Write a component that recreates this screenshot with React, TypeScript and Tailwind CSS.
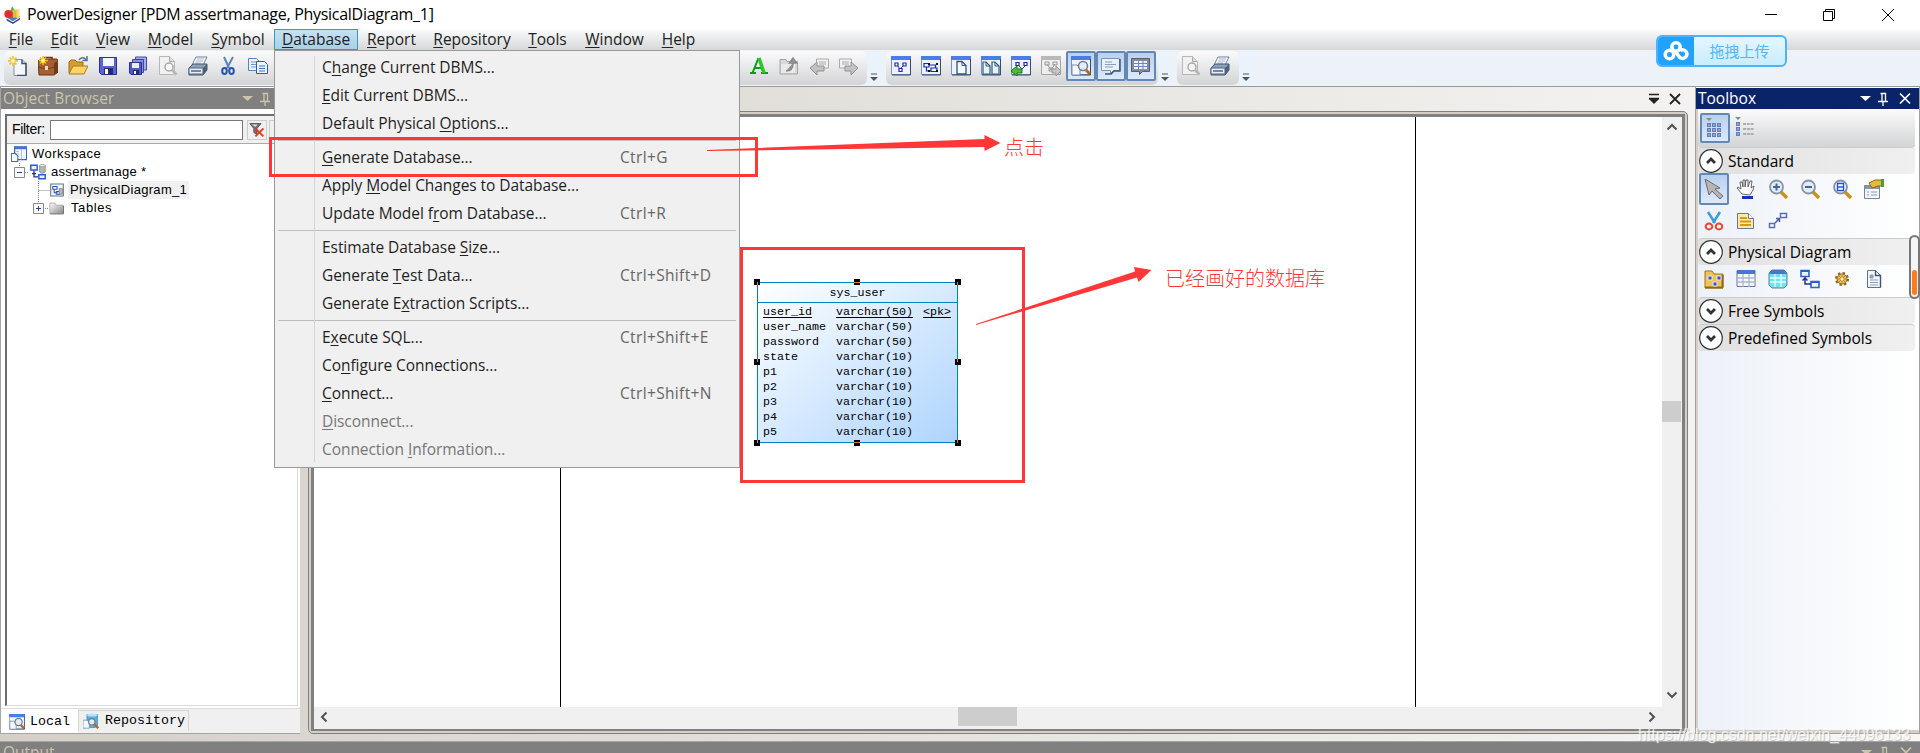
import type { ReactNode } from "react";

const ICONS: Record<string, ReactNode> = {
  newDoc: (
    <>
      <path d="M6 3.500h8l4 4V19.500H6z" fill="#f4f8fd" stroke="#8194ad" />
      <path d="M14 3.500v4h4v12H9" fill="none" stroke="#3d5273" strokeWidth="1.500" />
      <path d="M5 0v10M0 5h10M1.500 1.500l7 7M8.500 1.500l-7 7" stroke="#f0bf22" strokeWidth="1.500" />
      <circle cx="5" cy="5" r="2" fill="#fff3a0" />
    </>
  ),
  project: (
    <>
      <path d="M7 4V1.500h7V4" fill="none" stroke="#6b3413" strokeWidth="1.500" />
      <path d="M0 5l4-2h15l1 2v11l-4 3H1z" fill="#a65f34" stroke="#6b3413" />
      <path d="M16 7l4-2v11l-4 3z" fill="#6f3a1a" />
      <path d="M1 11c4 2 11 2 15 0" fill="none" stroke="#70371a" />
      <rect x="7" y="10" width="3" height="4" fill="#e9d9b8" />
      <path d="M5 0v9M1 4.500h9M2 1.500l6 6M8 1.500l-6 6" stroke="#f0bf22" strokeWidth="1.500" />
      <circle cx="5" cy="4.500" r="2" fill="#fff3a0" />
    </>
  ),
  open: (
    <>
      <path d="M1 17V6l2-2h4l2 2h6v11z" fill="#d69c30" stroke="#9a6b16" />
      <path d="M1 18l4-8h15l-4 8z" fill="#ffd465" stroke="#a97a1e" />
      <path d="M11 4c2-3 5-3 7-.5M19 0v4.500h-4.500" fill="none" stroke="#56739b" strokeWidth="1.500" />
    </>
  ),
  save: (
    <>
      <path d="M1.500 1.500h17v17h-15l-2-2z" fill="#5a62d6" stroke="#2c3187" />
      <rect x="5" y="2" width="11" height="8" fill="#f4f6fd" />
      <rect x="6" y="12" width="9" height="7" fill="#252a70" />
      <rect x="7" y="13" width="3" height="5" fill="#fff" />
    </>
  ),
  saveAll: (
    <>
      <path d="M7.500 1h11v13h-11z" fill="#a3abe8" stroke="#454da8" />
      <path d="M4.500 3.500h11v13h-11z" fill="#8790df" stroke="#3d449f" />
      <path d="M1.500 6.500h12v12H3l-1.500-1.500z" fill="#5058c8" stroke="#2c3187" />
      <rect x="4" y="7" width="7" height="5" fill="#e8ecfb" />
      <rect x="5" y="14" width="6" height="5" fill="#252a70" />
      <rect x="6" y="15" width="2" height="3" fill="#fff" />
    </>
  ),
  preview: (
    <>
      <path d="M1.500.5h10l5 5v13h-15z" fill="#f1f1f1" stroke="#b7b7b7" />
      <path d="M11.500.5v5h5" fill="#ddd" stroke="#aaa" />
      <circle cx="11" cy="11" r="4" fill="#f7f7f7" stroke="#a8a8a8" strokeWidth="1.500" />
      <path d="M14 14l4.500 4.500" stroke="#b5b5b5" strokeWidth="2.500" />
    </>
  ),
  print: (
    <>
      <path d="M8 1h11l-4 8H4z" fill="#fdfdff" stroke="#6c7f98" />
      <path d="M9 3h7M8 5h7M7 7h6" stroke="#9fb4d0" />
      <path d="M1 12l4-4h14v6l-4 5H1z" fill="#8ea1ba" stroke="#44566f" />
      <path d="M1 12h14v6H1z" fill="#e6edf6" stroke="#52657f" />
      <path d="M15 12l4-4v6l-4 5z" fill="#4c607c" />
      <path d="M3 15h10" stroke="#52657f" strokeWidth="1.500" />
    </>
  ),
  cut: (
    <>
      <path d="M6 1l5 11M15 1L9 12" stroke="#5e83b8" strokeWidth="2" />
      <ellipse cx="6.500" cy="15" rx="2.300" ry="3" fill="none" stroke="#2554b0" strokeWidth="2" />
      <ellipse cx="13.500" cy="15" rx="2.300" ry="3" fill="none" stroke="#2554b0" strokeWidth="2" />
    </>
  ),
  copy: (
    <>
      <path d="M.5 2.500h8l3 3v9H.5z" fill="#eef4fd" stroke="#5b82c4" />
      <path d="M3 6h6M3 8.500h6M3 11h6" stroke="#6c96d8" />
      <path d="M8.500 5.500h8l3 3v9h-11z" fill="#eef4fd" stroke="#2f5cab" />
      <path d="M11 10h6M11 12.500h6M11 15h6" stroke="#3e72c6" />
    </>
  ),
  font: (
    <>
      <path d="M1 17h6M12 17h7M3.500 17L9.500 2M6 12h8" fill="none" stroke="#109a10" strokeWidth="2" />
      <path d="M10 2l5 15" stroke="#2cc42c" strokeWidth="3.500" />
    </>
  ),
  upFolder: (
    <>
      <path d="M1 3.500h6l1 2h10.500v12.500H1z" fill="#d9d9d9" stroke="#a5a5a5" />
      <path d="M2 8h14v9H2z" fill="#e9e9e9" />
      <path d="M7 15c5 0 7-2 7-8M10.500 7h7L14 2z" fill="#929292" stroke="#8a8a8a" strokeWidth="1.500" />
    </>
  ),
  back: (
    <>
      <path d="M7.500 3h12v9h-12z" fill="#f1f1f1" stroke="#aaa" />
      <path d="M10 6h7M10 8h7" stroke="#aaa" />
      <path d="M1 12l7-6v4h7v5H8v4z" fill="#c2c2c2" stroke="#919191" />
    </>
  ),
  forward: (
    <>
      <path d="M.5 3h12v9H.5z" fill="#f1f1f1" stroke="#aaa" />
      <path d="M3 6h7M3 8h7" stroke="#aaa" />
      <path d="M19 12l-7-6v4H6v5h6v4z" fill="#c2c2c2" stroke="#919191" />
    </>
  ),
  diagram: (
    <>
      <WindowFrame />
      <path d="M6 9l3 4 4-4" fill="none" stroke="#2c35b5" />
      <path d="M4 7h3v3H4zM12 7h3v3h-3zM8 12.500h3v3H8z" fill="#fff" stroke="#1d27b5" strokeWidth="1.200" />
    </>
  ),
  selection: (
    <>
      <WindowFrame />
      <path d="M3 7.500h5v3.500H3zM10 12h6v3.500h-6zM5.500 11v4h4M8.500 9h6v3" fill="none" stroke="#1d27b5" strokeWidth="1.200" />
      <path d="M7 7h2v2H7zM15 7h2v2h-2zM7 14h2v2H7zM15 14h2v2h-2z" fill="#111" />
    </>
  ),
  page: (
    <>
      <WindowFrame />
      <path d="M6 5.500h5l4 4V18H6z" fill="#f2f8fd" stroke="#30547b" strokeWidth="1.300" />
      <path d="M11 5.500v4h4" fill="none" stroke="#30547b" />
    </>
  ),
  pages: (
    <>
      <WindowFrame />
      <path d="M2 6h3l4 4v8H2zM11 6h3l4 4v8h-7z" fill="#e9f4fc" stroke="#36587c" strokeWidth="1.200" />
      <path d="M5 6v4h4M14 6v4h4" fill="none" stroke="#36587c" />
    </>
  ),
  diagramBack: (
    <>
      <WindowFrame />
      <path d="M7 9l4 4 4-4" fill="none" stroke="#2c35b5" />
      <path d="M5 6.500h3v3H5zM13 6.500h3v3h-3z" fill="#fff" stroke="#1d27b5" strokeWidth="1.200" />
      <path d="M0 15l6-5v3h5v4H6v3z" fill="#4cbd35" stroke="#177a15" />
    </>
  ),
  diagramNext: (
    <>
      <path d="M.5.5h19v18H.5z" fill="#eee" stroke="#a5a5a5" />
      <path d="M0 0h20v4H0z" fill="#b9b9b9" />
      <path d="M6 8l4 6 4-6M4 6h4v3H4zM12 6h4v3h-4zM8 12h4v3H8z" fill="#e8e8e8" stroke="#999" />
      <path d="M20 15l-5-5v3h-4v4h4v3z" fill="#c6c6c6" stroke="#9a9a9a" />
    </>
  ),
  browse: (
    <>
      <WindowFrame />
      <path d="M1 9h5l3 3v7H1z" fill="#f4f8fd" stroke="#7b8ea9" />
      <circle cx="12" cy="10" r="4.500" fill="#e3ecf6" stroke="#6b7c93" strokeWidth="1.500" />
      <path d="M15 14l4 4" stroke="#b56a1d" strokeWidth="3" />
    </>
  ),
  output: (
    <>
      <path d="M.5 2.500h18v12h-6l-3 3v-3h-9z" fill="#e8f0fb" stroke="#7d93b4" />
      <path d="M19 3v12h-6l-3 3H4" fill="none" stroke="#3f5777" strokeWidth="1.500" />
      <path d="M4 6h7M4 8.500h11M4 11h8" stroke="#8b9db8" />
    </>
  ),
  grid: (
    <>
      <path d="M.5 2.500h18v13h-7l-3 3v-3h-8z" fill="#858b98" stroke="#555f70" />
      <path d="M3 5h13v8H3z" fill="#eef3ff" />
      <path d="M3 7.500h13M3 10.500h13M7.500 5v9M12 5v9" stroke="#6982d8" />
    </>
  ),
  pointer: <path d="M1 0l15 9-5 1 8 7-3 3-8-8-3 4z" fill="#b5b5b5" stroke="#6c6c6c" />,
  hand: (
    <>
      <path d="M6 15L1 9l1-1 3 2-1-7h2l1 5V1h2v7l1-7h2v7l2-6h2l-1 7 3-2-1 4-3 5z" fill="#fff" stroke="#444" strokeWidth=".8" />
      <path d="M6 17h11v3H6z" fill="#1430c4" />
    </>
  ),
  zoomIn: (
    <>
      <Lens />
      <path d="M5 8h7M8.500 4.500v7" stroke="#41659e" strokeWidth="2" />
    </>
  ),
  zoomOut: (
    <>
      <Lens />
      <path d="M5 8h7" stroke="#41659e" strokeWidth="2" />
    </>
  ),
  zoomPage: (
    <>
      <Lens />
      <path d="M5.500 4.500h6v7h-6zM5.500 8h6" fill="#fff" stroke="#2352e0" strokeWidth="1.300" />
    </>
  ),
  properties: (
    <>
      <path d="M.5 6.500h15v13H.5z" fill="#f3f6fb" stroke="#77869c" />
      <path d="M1 7h14v3H1z" fill="#8797ae" />
      <path d="M3 13h2M7 13h6M3 16h2M7 16h6" stroke="#8796ad" />
      <path d="M5 4l6-3h9v6h-6l-6 2z" fill="#e6bb35" stroke="#8b661b" />
      <path d="M17 0h3v8h-3z" fill="#4a9a46" />
    </>
  ),
  cutRed: (
    <>
      <path d="M4 1l7 11M16 1L9 12" stroke="#3d9bdc" strokeWidth="2.500" />
      <ellipse cx="5" cy="15.500" rx="3.300" ry="3" fill="none" stroke="#ed4434" strokeWidth="2" />
      <ellipse cx="15" cy="15.500" rx="3.300" ry="3" fill="none" stroke="#ed4434" strokeWidth="2" />
    </>
  ),
  note: (
    <>
      <path d="M1.500 2.500h11l5 5v10h-16z" fill="#fde9a1" stroke="#6c7794" />
      <path d="M12.500 2.500v5h5" fill="#fff" stroke="#6c7794" />
      <path d="M4 7h7M4 10.500h11M4 14h11" stroke="#d89a18" strokeWidth="1.800" />
    </>
  ),
  link: (
    <>
      <path d="M1.500 12.500h5v4h-5zM12.500 2.500h6v4h-6z" fill="#fff" stroke="#596eb8" strokeWidth="1.500" />
      <path d="M7 12l4-4M8 7.500h3.500V11" fill="none" stroke="#4b5f9f" strokeWidth="1.500" />
    </>
  ),
  package: (
    <>
      <path d="M1 19V2h7l2 3h9v14z" fill="#f0c352" stroke="#9d7520" />
      <path d="M1 18.500h18M18.500 6v12" stroke="#8f681b" strokeWidth="2" />
      <path d="M4 7h4v4H4zM13 7h4v4h-4zM9 13h4v4H9z" fill="#3455c9" stroke="#dfe8ff" />
    </>
  ),
  table: (
    <>
      <path d="M1 1.500h18v16H1z" fill="#f6f8fd" stroke="#66799c" />
      <path d="M1 1h18v4H1z" fill="#4d73d0" />
      <path d="M1 9h18M1 13h18M7 5v13M13 5v13" stroke="#a9b7d2" strokeWidth="1.300" />
    </>
  ),
  view: (
    <>
      <path d="M4 1h12l3 3v12l-3 3H4l-3-3V4z" fill="#6fe4ea" stroke="#5b83a5" />
      <path d="M4 1h12l3 4H1z" fill="#4777cc" />
      <path d="M2 9h16M2 13h16M7 5v13M13 5v13" stroke="#e6ffff" strokeWidth="1.300" />
    </>
  ),
  reference: (
    <>
      <path d="M1 1.500h8v6H1zM11 12.500h8v6h-8z" fill="#eef5ff" stroke="#2b62c7" strokeWidth="1.600" />
      <path d="M1 1h8v2H1zM11 12h8v2h-8z" fill="#2b62c7" />
      <path d="M5 8v7h6M2.500 11.500L5 9l2.500 2.500" fill="none" stroke="#20309c" strokeWidth="1.500" />
    </>
  ),
  gear: (
    <>
      <circle cx="10" cy="10" r="5.500" fill="none" stroke="#8a5e19" strokeWidth="3" strokeDasharray="2.200 2.100" />
      <circle cx="10" cy="10" r="5" fill="#f0bd54" stroke="#9a6d22" />
      <path d="M10 6v8M6 10h8M7 7l6 6M13 7l-6 6" stroke="#a6792d" strokeWidth=".8" />
      <circle cx="10" cy="10" r="1.500" fill="#fff2ca" />
    </>
  ),
  file: (
    <>
      <path d="M3.500 1.500h8l5 5v12h-13z" fill="#f3f7fc" stroke="#5e718e" />
      <path d="M11.500 1.500v5h5v12" fill="none" stroke="#41546f" strokeWidth="1.400" />
      <path d="M6 6h3v3H6zM6 11h8M6 13.500h8M6 16h8" fill="#8fa0ba" stroke="#8fa0ba" />
    </>
  ),
  iconView: (
    <>
      <path d="M0 0h6L3 3z" fill="#888" />
      <path
        d="M1 5h4v4H1zM6 5h4v4H6zM11 5h4v4h-4zM1 10h4v4H1zM6 10h4v4H6zM11 10h4v4h-4zM1 15h4v4H1zM6 15h4v4H6zM11 15h4v4h-4z"
        fill="#5a83c4"
      />
      <path
        d="M2 7h2M7 7h2M12 7h2M2 12h2M7 12h2M12 12h2M2 17h2M7 17h2M12 17h2"
        stroke="#c89ab8"
        strokeWidth="1.500"
      />
    </>
  ),
  listView: (
    <>
      <path d="M0 0h6L3 3z" fill="#888" />
      <path d="M1 5h4v4H1zM1 10h4v4H1zM1 15h4v4H1z" fill="#5a83c4" />
      <path d="M2 7h2M2 12h2M2 17h2" stroke="#c89ab8" strokeWidth="1.500" />
      <path d="M8 7h11M8 12h11M8 17h11" stroke="#9a9a9a" strokeWidth="1.500" strokeDasharray="3 .8" />
    </>
  ),
  repository: (
    <>
      <path d="M5 2v14c2 3 11 3 13 0V2z" fill="#55b4e4" stroke="#3887b8" />
      <ellipse cx="11.500" cy="2.500" rx="6.500" ry="2" fill="#b5e3f7" />
      <path d="M0 9h5l3 3v7H0z" fill="#f4f8fd" stroke="#7b8ea9" />
      <circle cx="11" cy="11" r="4" fill="#e3ecf6" stroke="#6b7c93" strokeWidth="1.500" />
      <path d="M14 14l5 5" stroke="#b56a1d" strokeWidth="3" />
    </>
  ),
  workspace: (
    <>
      <path d="M4.500 1h15v16h-15z" fill="#f3f7ff" stroke="#3763b8" strokeWidth="1.500" />
      <path d="M4 1h16v3H4z" fill="#3e73dc" />
      <path d="M6 7h4M6 10h4M6 13h4M13 4v13" stroke="#8fb0e8" />
      <path d="M.5 9.500h5l3 3v7h-8z" fill="#f3f8fb" stroke="#526b84" strokeWidth="1.300" />
    </>
  ),
  model: (
    <>
      <path d="M1 1.500h8v6H1zM11 13.500h8v5h-8z" fill="#eff6ff" stroke="#2360cd" strokeWidth="1.800" />
      <path d="M5 8v8h5M2.500 12h5" fill="none" stroke="#272a91" strokeWidth="1.600" />
      <path d="M12 2v8c1 2 6 2 7 0V2z" fill="#b5b5b5" stroke="#878787" />
      <ellipse cx="15.500" cy="2" rx="3.500" ry="1.500" fill="#eee" stroke="#999" />
    </>
  ),
  physical: (
    <>
      <path d="M1 1.500h18v17H1z" fill="#f3f7fc" stroke="#65748c" strokeWidth="1.500" />
      <path d="M4 5h6v4H4zM6 9v5h5M9 12h5v4H9z" fill="#fff" stroke="#2058c4" strokeWidth="1.500" />
      <path d="M13 8v8h5V8z" fill="#b8b8b8" stroke="#777" />
    </>
  ),
  folder: (
    <>
      <path d="M.5 18V3h7l2 3h10v12z" fill="url(#folderFill)" stroke="#999" />
      <path d="M1 18.500h19V7" fill="none" stroke="#555" />
      <linearGradient id="folderFill" x2="1" y2="1">
        <stop stopColor="#fff" />
        <stop offset="1" stopColor="#888" />
      </linearGradient>
    </>
  ),
  filterOff: (
    <>
      <path d="M1 2h14l-5 6v8l-4-3V8z" fill="#70757b" stroke="#444" />
      <path d="M3 3h8L8 6z" fill="#dce1e5" />
      <path d="M8 8l10 10M18 8L8 18" stroke="#e43d22" strokeWidth="2.500" />
    </>
  ),
  app: (
    <>
      <path d="M2 11l9 6 8-5-8-6z" fill="#5577bd" />
      <path d="M4 14l7 4 8-5v2l-8 5-7-4z" fill="#374f8e" />
      <path d="M10 0l4 6H8z" fill="#58b64d" />
      <path d="M11 4h7v9h-7z" fill="#e8b637" />
      <path d="M15 4h3v9h-3z" fill="#f9dc70" />
      <circle cx="6" cy="9" r="4.500" fill="#e02f27" />
    </>
  ),
};

function WindowFrame() {
  return (
    <>
      <path d="M.5.5h19v18H.5z" fill="#eef2fa" stroke="#7b93be" />
      <path d="M0 0h20v4H0z" fill="#4b7de8" />
      <path d="M19.500 3v16H1" fill="none" stroke="#344d70" />
    </>
  );
}

function Lens() {
  return (
    <>
      <path d="M13 13l6 6" stroke="#c79325" strokeWidth="3.500" />
      <circle cx="8.500" cy="8" r="6.500" fill="#e3edfa" stroke="#8a93a1" strokeWidth="1.800" />
    </>
  );
}

function Icon({ name, className = "size-5" }: { name: string; className?: string }) {
  return (
    <svg viewBox="0 0 20 20" className={`block shrink-0 ${className}`}>
      {ICONS[name]}
    </svg>
  );
}

// "&" marks the mnemonic letter, as in a Win32 resource string
function Mnemonic({ text }: { text: string }) {
  const at = text.indexOf("&");
  return (
    <span className="whitespace-pre">
      {text.slice(0, at)}
      <span className="underline decoration-1 underline-offset-2">{text[at + 1]}</span>
      {text.slice(at + 2)}
    </span>
  );
}

const MENUS = [
  { label: "&File", width: "w-[42px]" },
  { label: "&Edit", width: "w-[45px]" },
  { label: "&View", width: "w-[52px]" },
  { label: "&Model", width: "w-[63px]" },
  { label: "&Symbol", width: "w-[72px]" },
  { label: "&Database", width: "w-[84px]", open: true },
  { label: "&Report", width: "w-[67px]" },
  { label: "&Repository", width: "w-[94px]" },
  { label: "&Tools", width: "w-[57px]" },
  { label: "&Window", width: "w-[77px]" },
  { label: "&Help", width: "w-[51px]" },
];

type Entry = { label: string; keys?: string; disabled?: boolean };

const DATABASE_MENU: Entry[][] = [
  [{ label: "C&hange Current DBMS..." }, { label: "&Edit Current DBMS..." }, { label: "Default Physical &Options..." }],
  [
    { label: "&Generate Database...", keys: "Ctrl+G" },
    { label: "Apply &Model Changes to Database..." },
    { label: "Update Model f&rom Database...", keys: "Ctrl+R" },
  ],
  [
    { label: "Estimate Database &Size..." },
    { label: "Generate &Test Data...", keys: "Ctrl+Shift+D" },
    { label: "Generate E&xtraction Scripts..." },
  ],
  [
    { label: "E&xecute SQL...", keys: "Ctrl+Shift+E" },
    { label: "Co&nfigure Connections..." },
    { label: "&Connect...", keys: "Ctrl+Shift+N" },
    { label: "&Disconnect...", disabled: true },
    { label: "Connection &Information...", disabled: true },
  ],
];

const COLUMNS = [
  ["user_id", "varchar(50)", "<pk>"],
  ["user_name", "varchar(50)"],
  ["password", "varchar(50)"],
  ["state", "varchar(10)"],
  ["p1", "varchar(10)"],
  ["p2", "varchar(10)"],
  ["p3", "varchar(10)"],
  ["p4", "varchar(10)"],
  ["p5", "varchar(10)"],
];

const HANDLES = [
  [0, 0], [100, 0], [201, 0],
  [0, 80], [201, 80],
  [0, 161], [100, 161], [201, 161],
];

function TitleBar() {
  return (
    <div className="flex h-[29px] items-center bg-white">
      <Icon name="app" className="ml-0.5 h-[18px] w-5" />
      <span className="ml-[5px] whitespace-nowrap text-[16px] leading-[29px] tracking-[-0.28px] text-black">
        PowerDesigner [PDM assertmanage, PhysicalDiagram_1]
      </span>
      <svg className="ml-auto mr-[22px] h-[14px] w-[134px]" viewBox="0 0 134 14" fill="none" stroke="#000">
        <path d="M1 6.500h12M59.500 3.500h9v9h-9zM61.500 3v-1.500h9v9H69M118 1l12 12M130 1l-12 12" />
      </svg>
    </div>
  );
}

function MenuBar() {
  return (
    <div className="flex h-[21px] bg-linear-to-b from-[#fbfcfc] to-[#d5d7d9] text-[15.5px] leading-[21px] text-[#222]">
      {MENUS.map((m) => (
        <div
          key={m.label}
          className={`${m.width} flex h-[21px] shrink-0 items-center justify-center ${
            m.open ? "border border-[#2a9fd6] bg-linear-to-b from-[#c6e2f2] to-[#a9cfe3]" : ""
          }`}
        >
          <Mnemonic text={m.label} />
        </div>
      ))}
    </div>
  );
}

function Overflow() {
  return (
    <div className="flex h-[34px] w-[13px] items-end justify-center bg-[#eaf2fc] pb-[4px]">
      <svg className="size-2" viewBox="0 0 8 8">
        <path d="M1 1h6" stroke="#555" />
        <path d="M0 4h8L4 8z" fill="#555" />
      </svg>
    </div>
  );
}

const BAND = "flex h-[34px] items-center rounded-md bg-linear-to-b from-[#fbfbfc] to-[#d3d4d6] pb-1";
const PRESSED = "rounded-xs border-2 border-[#6588b2] bg-linear-to-b from-[#b9d0ef] to-[#dce9fb]";

function ToolBar() {
  const main = ["newDoc", "project", "open", "save", "saveAll", "preview", "print", "cut", "copy"];
  const nav = ["font", "upFolder", "back", "forward"];
  const views = ["diagram", "selection", "page", "pages", "diagramBack", "diagramNext", "browse", "output", "grid"];
  return (
    <div className="flex h-[37px] border-b border-[#999] bg-[#edf1f8] pt-px pl-1">
      <div className={`${BAND} w-[863px] justify-between pr-[3px]`}>
        <div className="flex gap-2.5 pl-[4px]">
          {main.map((n) => (
            <Icon key={n} name={n} />
          ))}
        </div>
        <div className="flex gap-2.5 pr-[5px]">
          {nav.map((n) => (
            <Icon key={n} name={n} />
          ))}
        </div>
      </div>
      <Overflow />
      <div className={`${BAND} ml-[6px] w-[272px]`}>
        {views.map((n, i) => (
          <div
            key={n}
            className={`flex h-[30px] w-[30px] shrink-0 items-center justify-center ${i > 5 ? PRESSED : ""}`}
          >
            <Icon name={n} />
          </div>
        ))}
      </div>
      <Overflow />
      <div className={`${BAND} ml-[6px] w-[62px] gap-[9px] pl-1`}>
        <Icon name="preview" />
        <Icon name="print" />
      </div>
      <Overflow />
    </div>
  );
}

function PaneButtons({ className }: { className: string }) {
  return (
    <svg className={`h-4 w-[54px] ${className}`} viewBox="0 0 54 16" fill="none" stroke="currentColor">
      <path d="M1 5h11L6.500 10z" fill="currentColor" stroke="none" />
      <path d="M21.500 2.500h5v7.500M23 2.500v7.500M19 10.500h10M24 11v4" strokeWidth="1.300" />
      <path d="M41 2.500l10 10M51 2.500l-10 10" strokeWidth="1.700" />
    </svg>
  );
}

function ObjectBrowser() {
  return (
    <div className="flex w-[300px] shrink-0 flex-col border-b border-l border-[#a5a5a5] bg-white">
      <div className="mt-px flex h-[21px] items-center justify-between bg-[#808080] pl-[2px] text-[15.5px] text-[#cbc5ac]">
        <span>Object Browser</span>
        <PaneButtons className="mr-[5px]" />
      </div>
      <div className="mt-[5px] mr-[2px] ml-1 flex min-h-0 flex-1 flex-col border-t-2 border-r border-b border-l-2 border-t-[#6e6e6e] border-r-[#dcdcdc] border-b-[#dcdcdc] border-l-[#6e6e6e] font-['Liberation_Sans',sans-serif] text-[13px] text-black">
        <div className="flex h-[28px] shrink-0 items-center border-b border-[#aaa] bg-[#f0f0f0] pl-[5px] text-[14px]">
          <span className="w-[38px] tracking-[-0.3px]">Filter:</span>
          <div className="h-5 w-[193px] border border-[#777] bg-white" />
          <div className="ml-1 flex h-5 w-[20px] items-center justify-center border border-[#ccc]">
            <Icon name="filterOff" className="size-4" />
          </div>
          <div className="ml-[2px] h-5 w-[20px] border border-[#ccc]" />
        </div>
        <Tree />
      </div>
      <div className="mt-[2px] flex h-[25px] shrink-0 border-t border-[#ddd] bg-[#f0f0f0] font-['Liberation_Mono',monospace] text-[13.33px] text-black">
        <div className="flex w-[77px] items-center gap-[5px] bg-white pt-px pl-[8px]">
          <Icon name="browse" className="size-4" />
          Local
        </div>
        <div className="mt-px flex h-[21px] w-[111px] items-center gap-[6px] border-t border-r border-l border-[#d5d5d5] pl-[4px]">
          <Icon name="repository" className="size-4" />
          Repository
        </div>
      </div>
    </div>
  );
}

function Toggle({ open }: { open: boolean }) {
  return (
    <svg className="size-[11px] shrink-0" viewBox="0 0 11 11">
      <path d="M.5.5h10v10H.5z" fill="#f8f8f8" stroke="#888" />
      <path d={open ? "M3 5.500h5" : "M3 5.500h5M5.500 3v5"} stroke="#2a439b" />
    </svg>
  );
}

function Tree() {
  return (
    <div className="relative flex-1 bg-white pt-px [&>div]:flex [&>div]:h-[18px] [&>div]:items-center [&>div]:whitespace-pre">
      <svg className="absolute top-px left-0 h-[80px] w-[60px]" viewBox="0 0 60 80" stroke="#888" strokeDasharray="1 1">
        <path d="M12.500 18v4M18 27.500h4M31.500 36v24M31.500 45.500h11M36 63.500h5" />
      </svg>
      <div className="gap-[5px] pl-1 tracking-[0.5px]">
        <Icon name="workspace" className="size-4" />
        Workspace
      </div>
      <div className="pl-[7px]">
        <Toggle open />
        <Icon name="model" className="mr-[5px] ml-[5px] size-4" />
        <span className="tracking-[0.3px]">assertmanage *</span>
      </div>
      <div className="pl-[43px]">
        <Icon name="physical" className="mr-[4px] size-[14px]" />
        <span className="h-[18px] w-[121px] bg-[#f0f0f0] pl-[2px] leading-[18px] tracking-[0.3px]">
          PhysicalDiagram_1
        </span>
      </div>
      <div className="pl-[26px]">
        <Toggle open={false} />
        <Icon name="folder" className="mr-[7px] ml-[5px] h-[14px] w-[15px]" />
        <span className="tracking-[0.6px]">Tables</span>
      </div>
    </div>
  );
}

function TableSymbol() {
  return (
    <div className="absolute top-[165px] left-[443px] h-[161px] w-[201px] border border-[#0080c0] bg-linear-to-br from-white to-[#aed4fd] font-['Liberation_Mono',monospace] text-[11.67px] text-black">
      <div className="h-5 border-b border-[#0080c0] text-center leading-[20px]">sys_user</div>
      <div className="pt-[2px] pl-[5px]">
        {COLUMNS.map(([name, type, key]) => (
          <div
            key={name}
            className={`flex h-[15px] leading-[15px] ${key ? "underline decoration-1 underline-offset-2" : ""}`}
          >
            <span className="inline-block w-[73px]">{name}</span>
            <span className="inline-block w-[87px]">{type}</span>
            {key && <span className="inline-block">{key}</span>}
          </div>
        ))}
      </div>
      <svg className="absolute -top-[5px] -left-[5px] h-[169px] w-[209px]" viewBox="-4 -4 209 169">
        {HANDLES.map(([x, y]) => (
          <g key={`${x}-${y}`}>
            <rect x={x - 3} y={y - 3} width="6" height="6" />
            {x === 100 ? (
              <path d={`M${x - 3} ${y - (y ? 0.5 : -0.5)}h6`} stroke="#f07838" />
            ) : (
              <path d={`M${x + (x ? -0.5 : 0.5)} ${y - (y ? 3 : 0)}v3`} stroke="#f07838" />
            )}
          </g>
        ))}
      </svg>
    </div>
  );
}

function Chevron({ d }: { d: string }) {
  return (
    <svg className="size-3 shrink-0" viewBox="0 0 12 12" fill="none" stroke="#505050" strokeWidth="2">
      <path d={d} />
    </svg>
  );
}

function Workspace() {
  return (
    <div className="ml-2 flex w-[1380px] shrink-0 flex-col">
      <div className="flex h-6 shrink-0 items-center justify-end pr-[6px]">
        <svg className="h-3 w-[34px]" viewBox="0 0 34 12" fill="none" stroke="#222">
          <path d="M1 1.500h10M1 5.500h10" strokeWidth="1.500" />
          <path d="M1 6h10l-5 5z" fill="#222" stroke="none" />
          <path d="M22 1l10 10M32 1L22 11" strokeWidth="1.800" />
        </svg>
      </div>
      <div className="flex-1 rounded-[5px] border border-[#808080] bg-[#d4d0c8] p-[2px]">
        <div className="flex h-full flex-col border-3 border-[#808080] border-b-2 bg-[#f0f0f0]">
          <div className="flex h-[590px]">
            <div className="relative h-full w-[1348px] bg-white">
              <div className="mr-[246px] ml-[246px] h-full w-[856px] border-r border-l border-black" />
              <TableSymbol />
            </div>
            <div className="flex w-5 flex-col items-center pt-[4px] pb-[6px]">
              <Chevron d="M1.500 8.500L6 4l4.500 4.500" />
              <div className="mt-[268px] mb-auto h-[21px] w-[19px] self-start bg-[#cdcdcd]" />
              <Chevron d="M1.500 3.500L6 8l4.500-4.500" />
            </div>
          </div>
          <div className="flex h-5 w-[1348px] items-center px-[4px]">
            <Chevron d="M8.500 1.500L4 6l4.500 4.500" />
            <div className="mr-auto ml-[628px] h-[19px] w-[59px] self-start bg-[#cdcdcd]" />
            <Chevron d="M3.500 1.500L8 6l-4.500 4.500" />
          </div>
        </div>
      </div>
    </div>
  );
}

function Group({ title, open, children }: { title: string; open?: boolean; children?: ReactNode }) {
  return (
    <div>
      <div className="flex h-[27px] items-center gap-[5px] rounded-sm border-t border-[#ccc] bg-linear-to-r from-[#e0e0e0] to-[#f0f0f0] pl-px text-[15.5px] leading-[26px] text-black">
        <svg className="size-6" viewBox="0 0 24 24" fill="#fff" stroke="#333">
          <circle cx="12" cy="12" r="11.300" strokeWidth="1.200" />
          <path d={open ? "M8 14l4-4 4 4" : "M8 10l4 4 4-4"} fill="none" strokeWidth="2.800" />
        </svg>
        <span className="pb-px">{title}</span>
      </div>
      {children}
    </div>
  );
}

function Toolbox() {
  const standard = ["pointer", "hand", "zoomIn", "zoomOut", "zoomPage", "properties", "cutRed", "note", "link"];
  const physical = ["package", "table", "view", "reference", "gear", "file"];
  return (
    <div className="ml-[7px] flex w-[225px] shrink-0 flex-col border-r border-b border-l border-[#a0a0a0] bg-white">
      <div className="mt-px flex h-[21px] shrink-0 items-center justify-between bg-[#0a246a] pl-[2px] text-[15.5px] text-white">
        Toolbox
        <PaneButtons className="mr-[6px]" />
      </div>
      <div className="flex-1 border-b-3 border-l-2 border-[#d4d0c8] bg-linear-to-r from-[#edf1f8] to-white pt-px pr-1">
        <div className="flex h-[37px] gap-[5px] bg-linear-to-b from-[#fbfbfc] to-[#d3d4d6] pt-[3px] pl-[2px]">
          <div className={`h-[30px] w-[30px] p-[3px] pl-1 ${PRESSED}`}>
            <Icon name="iconView" />
          </div>
          <Icon name="listView" className="mt-1 size-5" />
        </div>
        <Group title="Standard" open>
          <div className="-mt-px flex h-[65px] flex-wrap content-start gap-x-[2px] pl-px">
            {standard.map((n, i) => (
              <div
                key={n}
                className={`flex h-[32px] w-[30px] items-center justify-center ${i === 0 ? PRESSED : ""}`}
              >
                <Icon name={n} />
              </div>
            ))}
          </div>
        </Group>
        <Group title="Physical Diagram" open>
          <div className="-mt-px flex h-[33px] gap-x-[2px] pl-px">
            {physical.map((n) => (
              <div key={n} className="flex h-[30px] w-[30px] items-center justify-center">
                <Icon name={n} />
              </div>
            ))}
          </div>
        </Group>
        <Group title="Free Symbols" />
        <Group title="Predefined Symbols" />
      </div>
    </div>
  );
}

function DatabaseMenu() {
  return (
    <div className="absolute top-[50px] left-[274px] h-[418px] w-[466px] border border-[#999] bg-[#f0f0f0] pt-[3px] text-[15.5px] tracking-[-0.06px] text-[#1f1f1f]">
      <div className="absolute top-[5px] left-[39px] h-[406px] w-px bg-[#d5d5d5]" />
      {DATABASE_MENU.map((group, g) => (
        <div key={g}>
          {g > 0 && (
            <div className="mx-[3px] h-1.5 pt-[2px]">
              <div className="h-px bg-[#bdbdbd]" />
            </div>
          )}
          {group.map((e) => (
            <div
              key={e.label}
              className={`flex h-7 pl-[47px] leading-[26px] ${e.disabled ? "text-[#777]" : ""}`}
            >
              <div className="w-[298px] shrink-0">
                <Mnemonic text={e.label} />
              </div>
              <span className="tracking-[0.35px] text-[#666]">{e.keys}</span>
            </div>
          ))}
        </div>
      ))}
    </div>
  );
}

function UploadBadge() {
  return (
    <div className="absolute top-[35px] left-[1656px] flex h-8 w-[131px] overflow-hidden rounded-md border-2 border-[#4db3fb] bg-linear-to-b from-[#e6f6fe] to-[#c8edfe]">
      <div className="flex w-9 items-center justify-center bg-[#22a2ff]">
        <svg className="h-5 w-[26px]" viewBox="0 0 26 20" fill="none" stroke="#fff" strokeWidth="3.500">
          <circle cx="13" cy="6" r="4.200" />
          <circle cx="6.500" cy="13.500" r="4.300" />
          <path d="M12 10l4 5.500a4.300 4.300 0 1 0 1-5.800" />
        </svg>
      </div>
      <span className="flex-1 text-center font-['Noto_Sans_CJK_SC',sans-serif] text-[15px] leading-[28px] text-[#55b7f8]">
        拖拽上传
      </span>
    </div>
  );
}

function Annotations() {
  return (
    <div className="pointer-events-none absolute inset-0 font-['Noto_Sans_CJK_SC',sans-serif] text-[20px] leading-6 font-light text-[#ff3737]">
      <div className="absolute top-[137px] left-[269px] h-10 w-[489px] border-3 border-[#ff3737]" />
      <div className="absolute top-[247px] left-[740px] h-[236px] w-[285px] border-3 border-[#ff3737]" />
      <svg className="absolute inset-0 h-full w-full" viewBox="0 0 1920 753" fill="#ff3737">
        <path d="M707 150L984.500 139v-4l16 8-16 8v-4L707 151z" />
        <path d="M976 324L1135 271.500l-1-4.500 17.500 3-13 12-1.500-4.500L976 325z" />
      </svg>
      <span className="absolute top-[135px] left-[1004px] whitespace-nowrap">点击</span>
      <span className="absolute top-[266px] left-[1165px] whitespace-nowrap">已经画好的数据库</span>
    </div>
  );
}

export default function App() {
  return (
    <div className="relative flex h-[753px] w-[1920px] flex-col overflow-hidden bg-white font-['Open_Sans','Noto_Sans',sans-serif]">
      <TitleBar />
      <MenuBar />
      <ToolBar />
      <div className="flex h-[654px] shrink-0 bg-linear-to-r from-[#d4d0c8] to-[#f8f7f6] pb-2">
        <div className="flex h-[647px]">
          <ObjectBrowser />
          <Workspace />
          <Toolbox />
        </div>
      </div>
      <div className="flex h-3 shrink-0 justify-between overflow-hidden border-t border-[#a5a5a5] bg-[#808080] pl-[3px] text-[15.5px] leading-[21px] text-[#cbc5ac]">
        <span>Output</span>
        <PaneButtons className="mt-[3px] mr-[6px]" />
      </div>
      <div className="absolute top-[235px] left-[1909px] h-16 w-[11px] rounded-md border-2 border-[#777] bg-[#f5f5f5] px-px pt-[33px] pb-px">
        <div className="h-[25px] rounded-sm bg-[#ff7a22]" />
      </div>
      <DatabaseMenu />
      <UploadBadge />
      <Annotations />
      <span className="absolute top-[725px] left-[1638px] whitespace-nowrap font-['Liberation_Sans',sans-serif] text-[16px] leading-5 text-white/80 [text-shadow:1px_1px_1px_#9999]">
        https://blog.csdn.net/weixin_44096133
      </span>
    </div>
  );
}
